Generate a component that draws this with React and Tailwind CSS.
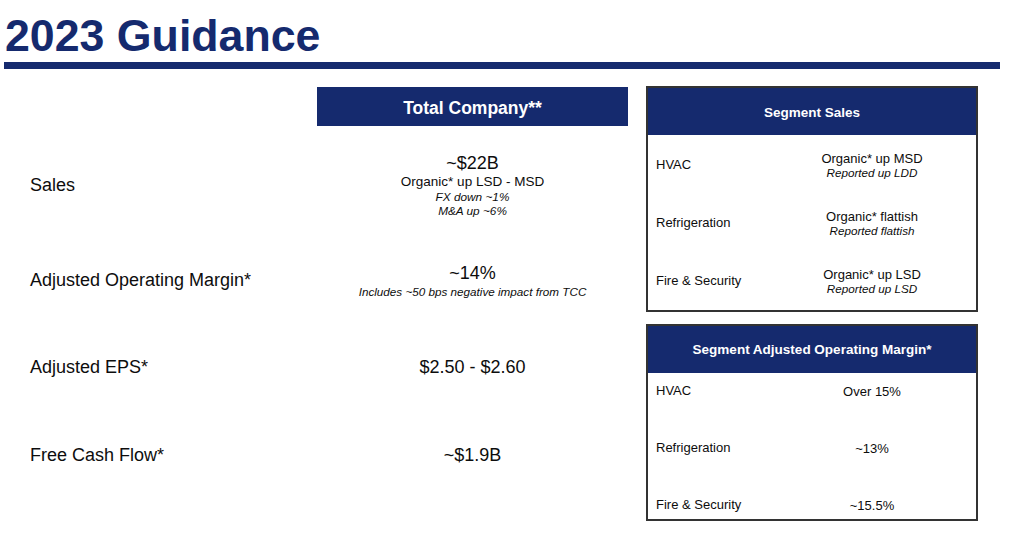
import React from "react";

const NAVY = "bg-[#152a6e]";

function SegRow({ label, top, bottom, h = "h-[58px]" }) {
  return (
    <div className={`grid grid-cols-[120px_1fr] items-center ${h}`}>
      <div className="pl-[8px] text-[13px] leading-[16px]">{label}</div>
      <div className="text-center">
        <div className="text-[13px] leading-[15px]">{top}</div>
        {bottom && <div className="text-[11.7px] leading-[13px] italic">{bottom}</div>}
      </div>
    </div>
  );
}

function MainRow({ h, label, children }) {
  return (
    <div className={`grid grid-cols-[317px_311px] items-center ${h}`}>
      <div className="pl-[30px] text-[18px] leading-[20px]">{label}</div>
      <div className="text-center">{children}</div>
    </div>
  );
}

export default function App() {
  return (
    <div
      className="w-[1013px] h-[535px] bg-white overflow-hidden text-[#0d0d0d]"
      style={{ fontFamily: '"Liberation Sans", Arial, sans-serif' }}
    >
      <div className="pl-[5px] pt-[14px] h-[58px] text-[44.7px] leading-[44px] font-bold text-[#152a6e]">
        2023 Guidance
      </div>
      <div className={`mt-[4px] ml-[4px] w-[996px] h-[7px] ${NAVY}`} />

      <div className="flex mt-[17px]">
        <div className="flex flex-col w-[628px]">
          <div
            className={`ml-[317px] mt-[1px] w-[311px] h-[39px] pt-[3px] ${NAVY} flex items-center justify-center text-white font-bold text-[17.5px]`}
          >
            Total Company**
          </div>
          <div className="h-[14px]" />
          <MainRow h="h-[89px]" label="Sales">
            <div className="text-[18px] leading-[22px]">~$22B</div>
            <div className="text-[13.5px] leading-[16px]">Organic* up LSD - MSD</div>
            <div className="text-[11.8px] leading-[14px] italic">FX down ~1%</div>
            <div className="text-[11.8px] leading-[14px] italic">M&amp;A up ~6%</div>
          </MainRow>
          <MainRow h="h-[102px]" label="Adjusted Operating Margin*">
            <div className="text-[18px] leading-[22px]">~14%</div>
            <div className="text-[11.7px] leading-[15px] italic">
              Includes ~50 bps negative impact from TCC
            </div>
          </MainRow>
          <MainRow h="h-[72px]" label="Adjusted EPS*">
            <div className="text-[18px] leading-[22px]">$2.50 - $2.60</div>
          </MainRow>
          <MainRow h="h-[104px]" label="Free Cash Flow*">
            <div className="text-[18px] leading-[22px]">~$1.9B</div>
          </MainRow>
        </div>

        <div className="ml-[18px] w-[332px] flex flex-col">
          <div className="border-2 border-[#333333]">
            <div
              className={`h-[47px] pt-[3px] ${NAVY} flex items-center justify-center text-white font-bold text-[13.5px]`}
            >
              Segment Sales
            </div>
            <div className="pt-[1px]">
              <SegRow label="HVAC" top="Organic* up MSD" bottom="Reported up LDD" />
              <SegRow label="Refrigeration" top="Organic* flattish" bottom="Reported flattish" />
              <SegRow label="Fire & Security" top="Organic* up LSD" bottom="Reported up LSD" />
            </div>
          </div>

          <div className="mt-[12px] border-2 border-[#333333]">
            <div
              className={`h-[47px] pt-[2px] ${NAVY} flex items-center justify-center text-white font-bold text-[13.5px]`}
            >
              Segment Adjusted Operating Margin*
            </div>
            <div className="pt-[8px] pb-[4px] flex flex-col gap-[37px]">
              <SegRow h="h-[20px]" label="HVAC" top="Over 15%" />
              <SegRow h="h-[20px]" label="Refrigeration" top="~13%" />
              <SegRow h="h-[20px]" label="Fire & Security" top="~15.5%" />
            </div>
          </div>
        </div>
      </div>
    </div>
  );
}
